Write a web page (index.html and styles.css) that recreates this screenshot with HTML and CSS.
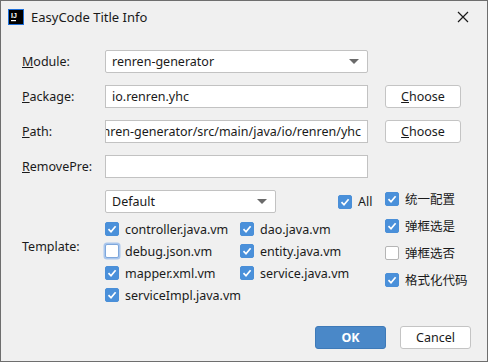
FILE: index.html
```html
<!DOCTYPE html>
<html lang="en">
<head>
    <meta charset="UTF-8">
    <title>EasyCode Title Info</title>
    <link rel="stylesheet" href="styles.css">
</head>
<body>
    <div class="window">
        <!-- title bar -->
        <div class="titlebar">
            <svg class="app-icon" width="16" height="16" viewBox="0 0 16 16">
                <rect x="0" y="0" width="16" height="16" fill="#1e6fd9"/>
                <rect x="1" y="1" width="14" height="14" fill="#000"/>
                <text x="3" y="9" font-family="Liberation Sans, sans-serif" font-weight="bold" font-size="7" fill="#fff">IJ</text>
                <rect x="3" y="11" width="5" height="1.2" fill="#fff"/>
            </svg>
            <span class="title">EasyCode Title Info</span>
            <svg class="close" width="12" height="12" viewBox="0 0 12 12">
                <path d="M1 1 L11 11 M11 1 L1 11" stroke="#1a1a1a" stroke-width="1.2"/>
            </svg>
        </div>

        <div class="form">
            <label class="label"><u>M</u>odule:</label>
            <div class="field combo">
                <span>renren-generator</span>
                <span class="arrow"></span>
            </div>
            <div></div>

            <label class="label"><u>P</u>ackage:</label>
            <div class="field"><span>io.renren.yhc</span></div>
            <button class="btn"><u>C</u>hoose</button>

            <label class="label"><u>P</u>ath:</label>
            <div class="field scrolled"><span>renren-generator/src/main/java/io/renren/yhc</span></div>
            <button class="btn"><u>C</u>hoose</button>

            <label class="label"><u>R</u>emovePre:</label>
            <div class="field"></div>
            <div></div>
        </div>

        <div class="template">
            <label class="label template-label">Template:</label>
            <div class="template-main">
                <div class="template-top">
                    <div class="field combo small">
                        <span>Default</span>
                        <span class="arrow"></span>
                    </div>
                    <div class="check all"><span class="box on"></span>All</div>
                </div>
                <div class="files">
                    <div class="check"><span class="box on"></span>controller.java.vm</div>
                    <div class="check"><span class="box on"></span>dao.java.vm</div>
                    <div class="check"><span class="box focus"></span>debug.json.vm</div>
                    <div class="check"><span class="box on"></span>entity.java.vm</div>
                    <div class="check"><span class="box on"></span>mapper.xml.vm</div>
                    <div class="check"><span class="box on"></span>service.java.vm</div>
                    <div class="check"><span class="box on"></span>serviceImpl.java.vm</div>
                </div>
            </div>
            <div class="options">
                <div class="check"><span class="box on"></span>统一配置</div>
                <div class="check"><span class="box on"></span>弹框选是</div>
                <div class="check"><span class="box"></span>弹框选否</div>
                <div class="check"><span class="box on"></span>格式化代码</div>
            </div>
        </div>

        <div class="footer">
            <button class="btn primary">OK</button>
            <button class="btn">Cancel</button>
        </div>
    </div>
</body>
</html>
```

FILE: styles.css
```css
body {
    margin: 0;
    font-family: "Noto Sans", "Noto Sans CJK SC", sans-serif;
    font-size: 12.5px;
    color: #1a1a1a;
}

.window {
    width: 488px;
    height: 362px;
    box-sizing: border-box;
    border: 1px solid #6e6e6e;
    background-color: #f0f0f0;
    display: flex;
    flex-direction: column;
}

.titlebar {
    height: 31px;
    display: flex;
    align-items: center;
    padding: 0 0 0 7px;
    font-size: 13px;
}

.app-icon {
    margin-right: 7px;
}

.title {
    flex-grow: 1;
}

.close {
    margin-right: 18px;
}

.form {
    display: grid;
    grid-template-columns: 83px 263px 93px;
    grid-auto-rows: 23px;
    row-gap: 12px;
    margin: 18px 0 0 21px;
}

.label {
    display: flex;
    align-items: center;
}

.field {
    background-color: #fff;
    border: 1px solid #c2c2c2;
    box-sizing: border-box;
    display: flex;
    align-items: center;
    padding: 0 6px;
    white-space: nowrap;
    overflow: hidden;
}

.field.scrolled {
    justify-content: flex-end;
}

.combo {
    border-radius: 2px;
    justify-content: space-between;
}

.arrow {
    width: 0;
    height: 0;
    border-left: 5px solid transparent;
    border-right: 5px solid transparent;
    border-top: 5px solid #6a6a6a;
    margin-right: 2px;
}

.btn {
    font-family: inherit;
    font-size: 12.5px;
    color: #1a1a1a;
    background-color: #fff;
    border: 1px solid #c4c4c4;
    border-radius: 3px;
    padding: 0;
    height: 23px;
}

.form .btn {
    width: 76px;
    justify-self: end;
}

.template {
    display: flex;
    margin: 7px 0 0 21px;
    height: 122px;
}

.template-label {
    width: 83px;
}

.template-main {
    width: 280px;
    padding-top: 5px;
}

.template-top {
    display: flex;
    align-items: center;
    height: 23px;
    margin-bottom: 5px;
}

.combo.small {
    width: 171px;
    height: 23px;
}

.check {
    display: flex;
    align-items: center;
    white-space: nowrap;
}

.check.all {
    margin-left: 62px;
}

.box {
    width: 14px;
    height: 14px;
    box-sizing: border-box;
    border: 1px solid #b5b5b5;
    border-radius: 2px;
    background-color: #fff;
    margin-right: 6px;
    flex-shrink: 0;
}

.box.on {
    border-color: #4a8fd8;
    background: #4a90da url("data:image/svg+xml;utf8,<svg xmlns='http://www.w3.org/2000/svg' width='14' height='14'><path d='M3.5 7.2 L6 9.8 L10.6 4.2' fill='none' stroke='white' stroke-width='1.7'/></svg>") no-repeat center;
}

.box.focus {
    border-color: #7ea7dc;
    box-shadow: 0 0 0 1.5px #a9c6ec;
}

.files {
    display: grid;
    grid-template-columns: 135px auto;
    grid-auto-rows: 22px;
}

.options {
    display: grid;
    grid-auto-rows: 27px;
}

.footer {
    display: flex;
    justify-content: flex-end;
    gap: 14px;
    margin: 19px 16px 0 0;
}

.footer .btn {
    width: 71px;
}

.btn.primary {
    background-color: #4a88c8;
    border-color: #3e7ab8;
    color: #fff;
    font-weight: bold;
}
```
